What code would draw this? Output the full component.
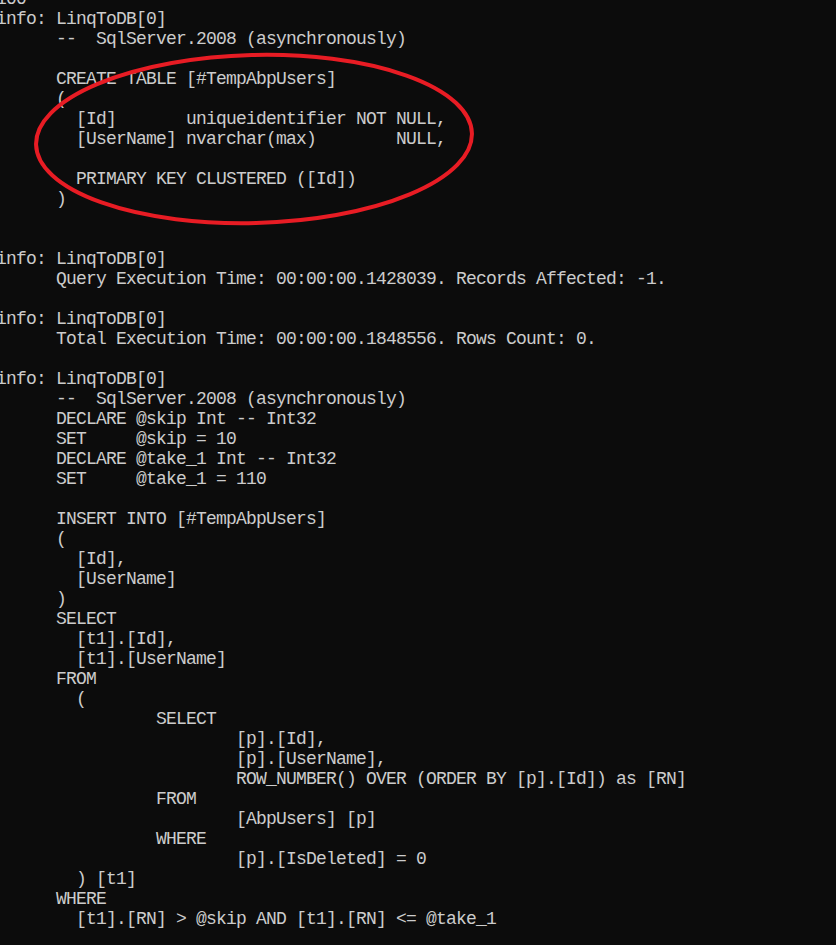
const lines: string[] = [
  "100",
  "info: LinqToDB[0]",
  "      --  SqlServer.2008 (asynchronously)",
  "",
  "      CREATE TABLE [#TempAbpUsers]",
  "      (",
  "        [Id]       uniqueidentifier NOT NULL,",
  "        [UserName] nvarchar(max)        NULL,",
  "",
  "        PRIMARY KEY CLUSTERED ([Id])",
  "      )",
  "",
  "",
  "info: LinqToDB[0]",
  "      Query Execution Time: 00:00:00.1428039. Records Affected: -1.",
  "",
  "info: LinqToDB[0]",
  "      Total Execution Time: 00:00:00.1848556. Rows Count: 0.",
  "",
  "info: LinqToDB[0]",
  "      --  SqlServer.2008 (asynchronously)",
  "      DECLARE @skip Int -- Int32",
  "      SET     @skip = 10",
  "      DECLARE @take_1 Int -- Int32",
  "      SET     @take_1 = 110",
  "",
  "      INSERT INTO [#TempAbpUsers]",
  "      (",
  "        [Id],",
  "        [UserName]",
  "      )",
  "      SELECT",
  "        [t1].[Id],",
  "        [t1].[UserName]",
  "      FROM",
  "        (",
  "                SELECT",
  "                        [p].[Id],",
  "                        [p].[UserName],",
  "                        ROW_NUMBER() OVER (ORDER BY [p].[Id]) as [RN]",
  "                FROM",
  "                        [AbpUsers] [p]",
  "                WHERE",
  "                        [p].[IsDeleted] = 0",
  "        ) [t1]",
  "      WHERE",
  "        [t1].[RN] > @skip AND [t1].[RN] <= @take_1",
]

export default function App() {
  return (
    <div className="relative h-[945px] w-[836px] overflow-hidden bg-[#0c0c0c]">
      {/* console output */}
      <pre className="-mt-[11px] -ml-[4px] font-['Liberation_Mono',monospace] text-[18px] leading-[20px] tracking-[-0.8px] text-[#cccccc]">
        {lines.map((l, i) => (
          <div key={i} className="h-[20px] whitespace-pre">
            {l}
          </div>
        ))}
      </pre>

      {/* red hand-drawn annotation */}
      <svg
        className="pointer-events-none absolute left-0 top-0"
        width="836"
        height="945"
        viewBox="0 0 836 945"
      >
        <ellipse
          cx="254"
          cy="139"
          rx="218"
          ry="84"
          transform="rotate(-1.5 254 139)"
          fill="none"
          stroke="#e81c24"
          strokeWidth="4"
        />
      </svg>
    </div>
  )
}
